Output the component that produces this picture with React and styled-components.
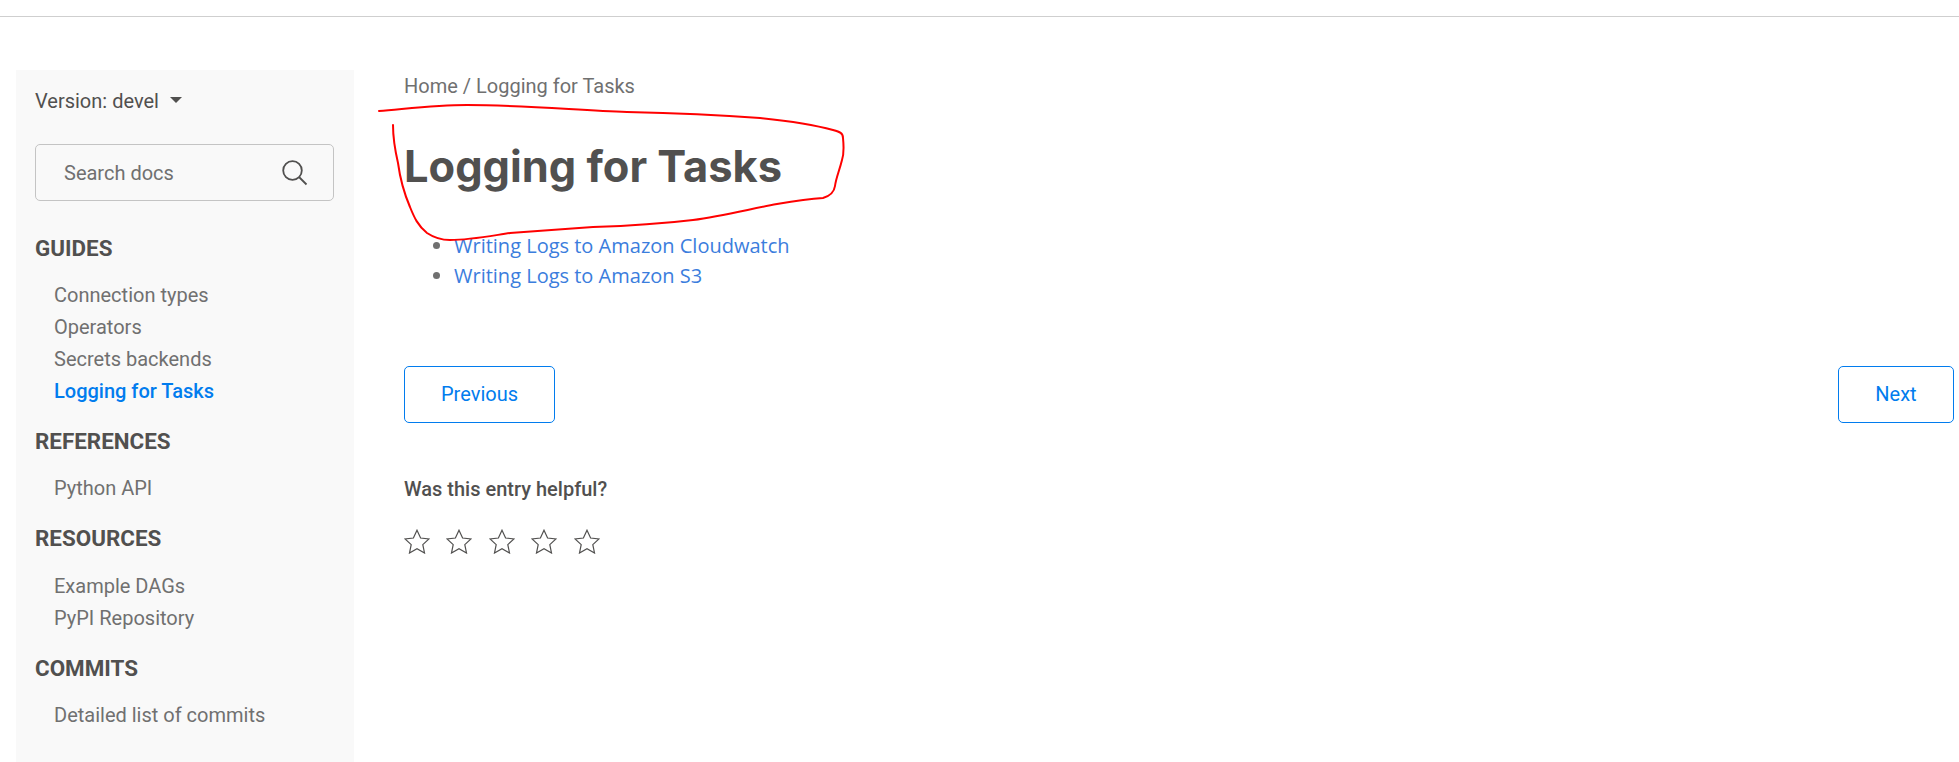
import React from 'react';
import styled, { createGlobalStyle } from 'styled-components';

const Global = createGlobalStyle`
  html, body {
    margin: 0;
    padding: 0;
    height: 762px;
    overflow: hidden;
    background: #fff;
    font-family: Roboto, "Liberation Sans", sans-serif;
  }
`;

const Page = styled.div`
  position: relative;
  width: 1959px;
  height: 762px;
  overflow: hidden;
`;

const TopBar = styled.header`
  height: 16px;
  border-bottom: 1px solid #cfcfcf;
`;

const Layout = styled.div`
  display: flex;
  padding: 53px 5px 0 16px;
`;

const Sidebar = styled.aside`
  width: 338px;
  height: 692px;
  flex-shrink: 0;
  box-sizing: border-box;
  background: #f9f9f9;
  padding: 19px 19px 0;
`;

const Version = styled.div`
  display: flex;
  align-items: center;
  gap: 11px;
  height: 24px;
  font-size: 20px;
  line-height: 24px;
  color: #51504f;
`;

const Caret = styled.span`
  width: 0;
  height: 0;
  border-left: 6px solid transparent;
  border-right: 6px solid transparent;
  border-top: 6px solid #51504f;
  margin-top: -3px;
`;

const Search = styled.div`
  display: flex;
  align-items: center;
  justify-content: space-between;
  box-sizing: border-box;
  width: 299px;
  height: 57px;
  margin-top: 31px;
  padding: 0 25px 0 28px;
  border: 1px solid #c4c4c4;
  border-radius: 5px;
  font-size: 20px;
  color: #707070;
`;

const SectionTitle = styled.h4`
  margin: ${({ $first }) => ($first ? '32px' : '19px')} 0 0;
  font-size: 22.4px;
  line-height: 30px;
  font-weight: 700;
  color: #51504f;
`;

const NavList = styled.ul`
  list-style: none;
  margin: ${({ $gap }) => $gap}px 0 0;
  padding: 0 0 0 19px;
`;

const NavItem = styled.li`
  height: 32px;
  font-size: 20px;
  line-height: 32px;
  color: ${({ $active }) => ($active ? '#017cee' : '#707070')};
  font-weight: ${({ $active }) => ($active ? 500 : 400)};
`;

const Main = styled.main`
  flex: 1;
  padding: 0 0 0 50px;
`;

const Crumbs = styled.div`
  font-size: 20px;
  line-height: 24px;
  margin-top: 4px;
  color: #707070;
`;

const Title = styled.h1`
  margin: 40px 0 0;
  font-family: Inter, Roboto, sans-serif;
  font-size: 43.4px;
  line-height: 56px;
  font-weight: 700;
  color: #51504f;
`;

const Toc = styled.ul`
  margin: 37px 0 0;
  padding: 0 0 0 50px;
  font-family: "Open Sans", sans-serif;
  font-size: 20px;
  line-height: 30px;
  color: #707070;
`;

const TocLink = styled.a`
  color: #3b7ddd;
  text-decoration: none;
`;

const Pager = styled.div`
  display: flex;
  justify-content: space-between;
  margin-top: 75px;
`;

const PagerButton = styled.a`
  display: flex;
  align-items: center;
  justify-content: center;
  box-sizing: border-box;
  min-width: 116px;
  height: 57px;
  padding: 0 36px 1px;
  border: 1px solid #017cee;
  border-radius: 5px;
  font-size: 20px;
  color: #017cee;
  background: #fff;
`;

const Helpful = styled.div`
  margin-top: 54px;
  font-size: 20px;
  line-height: 24px;
  font-weight: 500;
  color: #51504f;
`;

const Stars = styled.div`
  display: flex;
  gap: 16.4px;
  margin-top: 28px;
`;

const Scribble = styled.svg`
  position: absolute;
  left: 0;
  top: 0;
  pointer-events: none;
`;

const SearchIcon = () => (
  <svg width="27" height="27" viewBox="0 0 27 27" fill="none" stroke="#51504f" strokeWidth="1.8">
    <circle cx="11.5" cy="11.5" r="9.3" />
    <line x1="18" y1="18" x2="25.5" y2="25.5" />
  </svg>
);

const StarIcon = () => (
  <svg width="26" height="25" viewBox="0 0 26 25" fill="none" stroke="#51504f" strokeWidth="1.2" strokeLinejoin="miter">
    <polygon points="13,1.2 16.6,9 25,9.9 18.8,15.6 20.5,24 13,19.7 5.5,24 7.2,15.6 1,9.9 9.4,9" />
  </svg>
);

const sections = [
  { title: 'GUIDES', gap: 16, items: ['Connection types', 'Operators', 'Secrets backends', 'Logging for Tasks'] },
  { title: 'REFERENCES', gap: 16, items: ['Python API'] },
  { title: 'RESOURCES', gap: 17, items: ['Example DAGs', 'PyPI Repository'] },
  { title: 'COMMITS', gap: 16, items: ['Detailed list of commits'] },
];

export default function App() {
  return (
    <Page>
      <Global />
      <TopBar />
      <Layout>
        <Sidebar>
          <Version>
            Version: devel
            <Caret />
          </Version>
          <Search>
            Search docs
            <SearchIcon />
          </Search>
          {sections.map((s, i) => (
            <div key={s.title}>
              <SectionTitle $first={i === 0}>{s.title}</SectionTitle>
              <NavList $gap={s.gap}>
                {s.items.map((item) => (
                  <NavItem key={item} $active={item === 'Logging for Tasks'}>{item}</NavItem>
                ))}
              </NavList>
            </div>
          ))}
        </Sidebar>
        <Main>
          <Crumbs>Home / Logging for Tasks</Crumbs>
          <Title>Logging for Tasks</Title>
          <Toc>
            <li><TocLink>Writing Logs to Amazon Cloudwatch</TocLink></li>
            <li><TocLink>Writing Logs to Amazon S3</TocLink></li>
          </Toc>
          <Pager>
            <PagerButton>Previous</PagerButton>
            <PagerButton>Next</PagerButton>
          </Pager>
          <Helpful>Was this entry helpful?</Helpful>
          <Stars>
            {[0, 1, 2, 3, 4].map((n) => <StarIcon key={n} />)}
          </Stars>
        </Main>
      </Layout>
      <Scribble width="1959" height="762" fill="none" stroke="#f00" strokeWidth="2" strokeLinecap="round">
        <path d="M379 111 C405 109 435 105 467 105 C520 105 575 110 627 112 C675 113 720 115 760 118 C790 121 815 125 833 130 C840 132 843 133 843 138 C844 148 843 157 842 160 C839 172 836 178 835 186 C834 193 830 196 823 198 C808 199 795 201 777 204 C750 209 722 216 693 220 C660 224 625 226 593 227 C565 229 535 231 510 233 C490 236 470 240 450 240 C440 240 433 237 427 233 C418 226 414 217 410 207 C404 193 400 178 398 163 C395 150 393 137 393 125" />
      </Scribble>
    </Page>
  );
}
